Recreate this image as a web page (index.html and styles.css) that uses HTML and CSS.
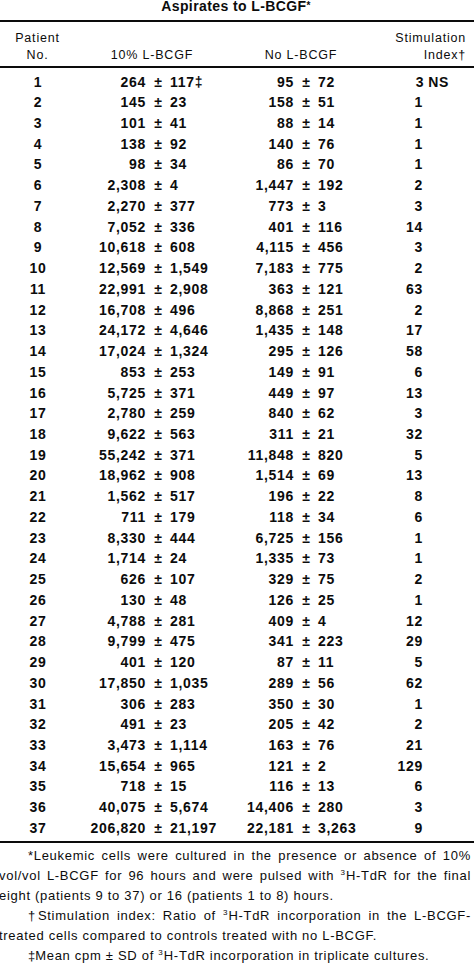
FILE: index.html
```html
<!DOCTYPE html>
<html>
<head>
<meta charset="utf-8">
<link rel="stylesheet" href="styles.css">
</head>
<body>
<div class="page">
  <div class="title">Aspirates to L-BCGF<span class="ast">*</span></div>
  <div class="rule thick"></div>
  <div class="head">
    <div class="h-pt">Patient<br>No.</div>
    <div class="h-c">10% L-BCGF</div>
    <div class="h-c">No L-BCGF</div>
    <div class="h-si">Stimulation<br>Index†</div>
  </div>
  <div class="rule thin"></div>
  <div class="rows">
    <div class="row"><span class="pt">1</span><span class="l">264</span><span class="pm">±</span><span class="r">117‡</span><span class="l">95</span><span class="pm">±</span><span class="r">72</span><span class="si">3<span class="ns">NS</span></span></div>
    <div class="row"><span class="pt">2</span><span class="l">145</span><span class="pm">±</span><span class="r">23</span><span class="l">158</span><span class="pm">±</span><span class="r">51</span><span class="si">1</span></div>
    <div class="row"><span class="pt">3</span><span class="l">101</span><span class="pm">±</span><span class="r">41</span><span class="l">88</span><span class="pm">±</span><span class="r">14</span><span class="si">1</span></div>
    <div class="row"><span class="pt">4</span><span class="l">138</span><span class="pm">±</span><span class="r">92</span><span class="l">140</span><span class="pm">±</span><span class="r">76</span><span class="si">1</span></div>
    <div class="row"><span class="pt">5</span><span class="l">98</span><span class="pm">±</span><span class="r">34</span><span class="l">86</span><span class="pm">±</span><span class="r">70</span><span class="si">1</span></div>
    <div class="row"><span class="pt">6</span><span class="l">2,308</span><span class="pm">±</span><span class="r">4</span><span class="l">1,447</span><span class="pm">±</span><span class="r">192</span><span class="si">2</span></div>
    <div class="row"><span class="pt">7</span><span class="l">2,270</span><span class="pm">±</span><span class="r">377</span><span class="l">773</span><span class="pm">±</span><span class="r">3</span><span class="si">3</span></div>
    <div class="row"><span class="pt">8</span><span class="l">7,052</span><span class="pm">±</span><span class="r">336</span><span class="l">401</span><span class="pm">±</span><span class="r">116</span><span class="si">14</span></div>
    <div class="row"><span class="pt">9</span><span class="l">10,618</span><span class="pm">±</span><span class="r">608</span><span class="l">4,115</span><span class="pm">±</span><span class="r">456</span><span class="si">3</span></div>
    <div class="row"><span class="pt">10</span><span class="l">12,569</span><span class="pm">±</span><span class="r">1,549</span><span class="l">7,183</span><span class="pm">±</span><span class="r">775</span><span class="si">2</span></div>
    <div class="row"><span class="pt">11</span><span class="l">22,991</span><span class="pm">±</span><span class="r">2,908</span><span class="l">363</span><span class="pm">±</span><span class="r">121</span><span class="si">63</span></div>
    <div class="row"><span class="pt">12</span><span class="l">16,708</span><span class="pm">±</span><span class="r">496</span><span class="l">8,868</span><span class="pm">±</span><span class="r">251</span><span class="si">2</span></div>
    <div class="row"><span class="pt">13</span><span class="l">24,172</span><span class="pm">±</span><span class="r">4,646</span><span class="l">1,435</span><span class="pm">±</span><span class="r">148</span><span class="si">17</span></div>
    <div class="row"><span class="pt">14</span><span class="l">17,024</span><span class="pm">±</span><span class="r">1,324</span><span class="l">295</span><span class="pm">±</span><span class="r">126</span><span class="si">58</span></div>
    <div class="row"><span class="pt">15</span><span class="l">853</span><span class="pm">±</span><span class="r">253</span><span class="l">149</span><span class="pm">±</span><span class="r">91</span><span class="si">6</span></div>
    <div class="row"><span class="pt">16</span><span class="l">5,725</span><span class="pm">±</span><span class="r">371</span><span class="l">449</span><span class="pm">±</span><span class="r">97</span><span class="si">13</span></div>
    <div class="row"><span class="pt">17</span><span class="l">2,780</span><span class="pm">±</span><span class="r">259</span><span class="l">840</span><span class="pm">±</span><span class="r">62</span><span class="si">3</span></div>
    <div class="row"><span class="pt">18</span><span class="l">9,622</span><span class="pm">±</span><span class="r">563</span><span class="l">311</span><span class="pm">±</span><span class="r">21</span><span class="si">32</span></div>
    <div class="row"><span class="pt">19</span><span class="l">55,242</span><span class="pm">±</span><span class="r">371</span><span class="l">11,848</span><span class="pm">±</span><span class="r">820</span><span class="si">5</span></div>
    <div class="row"><span class="pt">20</span><span class="l">18,962</span><span class="pm">±</span><span class="r">908</span><span class="l">1,514</span><span class="pm">±</span><span class="r">69</span><span class="si">13</span></div>
    <div class="row"><span class="pt">21</span><span class="l">1,562</span><span class="pm">±</span><span class="r">517</span><span class="l">196</span><span class="pm">±</span><span class="r">22</span><span class="si">8</span></div>
    <div class="row"><span class="pt">22</span><span class="l">711</span><span class="pm">±</span><span class="r">179</span><span class="l">118</span><span class="pm">±</span><span class="r">34</span><span class="si">6</span></div>
    <div class="row"><span class="pt">23</span><span class="l">8,330</span><span class="pm">±</span><span class="r">444</span><span class="l">6,725</span><span class="pm">±</span><span class="r">156</span><span class="si">1</span></div>
    <div class="row"><span class="pt">24</span><span class="l">1,714</span><span class="pm">±</span><span class="r">24</span><span class="l">1,335</span><span class="pm">±</span><span class="r">73</span><span class="si">1</span></div>
    <div class="row"><span class="pt">25</span><span class="l">626</span><span class="pm">±</span><span class="r">107</span><span class="l">329</span><span class="pm">±</span><span class="r">75</span><span class="si">2</span></div>
    <div class="row"><span class="pt">26</span><span class="l">130</span><span class="pm">±</span><span class="r">48</span><span class="l">126</span><span class="pm">±</span><span class="r">25</span><span class="si">1</span></div>
    <div class="row"><span class="pt">27</span><span class="l">4,788</span><span class="pm">±</span><span class="r">281</span><span class="l">409</span><span class="pm">±</span><span class="r">4</span><span class="si">12</span></div>
    <div class="row"><span class="pt">28</span><span class="l">9,799</span><span class="pm">±</span><span class="r">475</span><span class="l">341</span><span class="pm">±</span><span class="r">223</span><span class="si">29</span></div>
    <div class="row"><span class="pt">29</span><span class="l">401</span><span class="pm">±</span><span class="r">120</span><span class="l">87</span><span class="pm">±</span><span class="r">11</span><span class="si">5</span></div>
    <div class="row"><span class="pt">30</span><span class="l">17,850</span><span class="pm">±</span><span class="r">1,035</span><span class="l">289</span><span class="pm">±</span><span class="r">56</span><span class="si">62</span></div>
    <div class="row"><span class="pt">31</span><span class="l">306</span><span class="pm">±</span><span class="r">283</span><span class="l">350</span><span class="pm">±</span><span class="r">30</span><span class="si">1</span></div>
    <div class="row"><span class="pt">32</span><span class="l">491</span><span class="pm">±</span><span class="r">23</span><span class="l">205</span><span class="pm">±</span><span class="r">42</span><span class="si">2</span></div>
    <div class="row"><span class="pt">33</span><span class="l">3,473</span><span class="pm">±</span><span class="r">1,114</span><span class="l">163</span><span class="pm">±</span><span class="r">76</span><span class="si">21</span></div>
    <div class="row"><span class="pt">34</span><span class="l">15,654</span><span class="pm">±</span><span class="r">965</span><span class="l">121</span><span class="pm">±</span><span class="r">2</span><span class="si">129</span></div>
    <div class="row"><span class="pt">35</span><span class="l">718</span><span class="pm">±</span><span class="r">15</span><span class="l">116</span><span class="pm">±</span><span class="r">13</span><span class="si">6</span></div>
    <div class="row"><span class="pt">36</span><span class="l">40,075</span><span class="pm">±</span><span class="r">5,674</span><span class="l">14,406</span><span class="pm">±</span><span class="r">280</span><span class="si">3</span></div>
    <div class="row"><span class="pt">37</span><span class="l">206,820</span><span class="pm">±</span><span class="r">21,197</span><span class="l">22,181</span><span class="pm">±</span><span class="r">3,263</span><span class="si">9</span></div>
  </div>
  <div class="rule thick"></div>
  <div class="notes">
    <div class="ln just indent">*Leukemic cells were cultured in the presence or absence of 10%</div>
    <div class="ln just">vol/vol L-BCGF for 96 hours and were pulsed with <sup>3</sup>H-TdR for the final</div>
    <div class="ln">eight (patients 9 to 37) or 16 (patients 1 to 8) hours.</div>
    <div class="ln just indent"><span class="mk">†</span>Stimulation index: Ratio of <sup>3</sup>H-TdR incorporation in the L-BCGF-</div>
    <div class="ln">treated cells compared to controls treated with no L-BCGF.</div>
    <div class="ln indent"><span class="mk">‡</span>Mean cpm ± SD of <sup>3</sup>H-TdR incorporation in triplicate cultures.</div>
  </div>
</div>
</body>
</html>
```

FILE: styles.css
```css
html, body {
  margin: 0;
  padding: 0;
  background: #fff;
}

body {
  font-family: "Liberation Sans", Arial, Helvetica, sans-serif;
  color: #0c0c0c;
  width: 474px;
  height: 968px;
  overflow: hidden;
}

.page {
  width: 474px;
}

.title {
  height: 20px;
  font-size: 14px;
  font-weight: bold;
  line-height: 13px;
  letter-spacing: 0.4px;
  text-align: center;
  padding-right: 2px;
}

.title .ast {
  font-size: 10px;
  vertical-align: 2px;
  line-height: 0;
}

.rule {
  background: #0c0c0c;
}

.rule.thick {
  height: 2px;
}

.rule.thin {
  height: 1.5px;
}

.head {
  display: grid;
  grid-template-columns: 76px 152px 146px 1fr;
  align-items: end;
  padding: 8px 8px 2px 0;
  font-size: 12.5px;
  line-height: 17px;
  letter-spacing: 0.8px;
}

.h-pt {
  text-align: center;
  padding-right: 1px;
}

.h-c {
  text-align: center;
}

.h-si {
  text-align: right;
}

.rows {
  padding: 4px 0 2.4px 0;
}

.row {
  display: grid;
  grid-template-columns: 76px 70px 24px 62px 62px 24px 72px 33px;
  height: 20.74px;
  line-height: 20.74px;
  font-size: 14px;
  font-weight: bold;
  letter-spacing: 0.7px;
  white-space: nowrap;
}

.pt {
  text-align: center;
}

.l {
  text-align: right;
}

.pm {
  text-align: center;
  letter-spacing: 0;
}

.r {
  text-align: left;
}

.si {
  display: flex;
  justify-content: flex-end;
}

.ns {
  margin-right: -26px;
  padding-left: 4px;
}

.notes {
  margin: 2.5px 3px 0 -1px;
  font-size: 13px;
  line-height: 20px;
  letter-spacing: 0.7px;
}

.ln {
  white-space: nowrap;
}

.ln.just {
  white-space: normal;
  text-align: justify;
  text-align-last: justify;
}

.ln.indent {
  padding-left: 29px;
}

.mk {
  letter-spacing: 0;
}

.notes sup {
  font-size: 8px;
  line-height: 0;
  vertical-align: 5px;
  letter-spacing: 0;
  margin-right: 1px;
}
```
